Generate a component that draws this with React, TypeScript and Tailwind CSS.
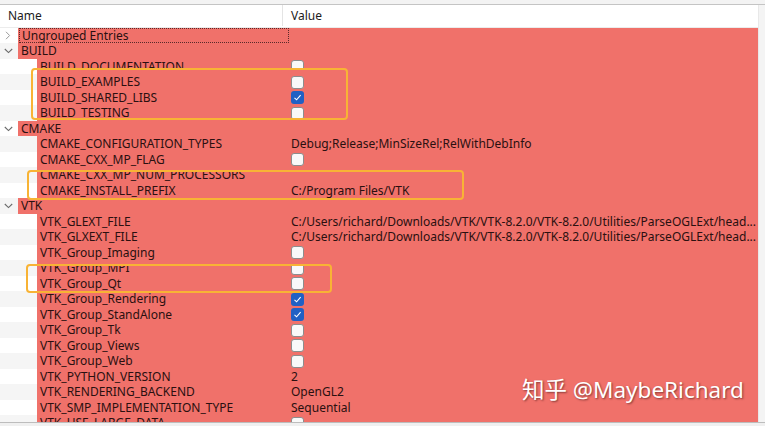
import React from "react";

type Val = { cb?: boolean; text?: string } | null;
type Row =
  | { kind: "group"; label: string; open: boolean; focus?: boolean }
  | { kind: "item"; label: string; value: Val; clip?: "top" | "bottom"; cut?: number };

const rows: Row[] = [
  { kind: "group", label: "Ungrouped Entries", open: false, focus: true },
  { kind: "group", label: "BUILD", open: true },
  { kind: "item", label: "BUILD_DOCUMENTATION", value: { cb: false }, clip: "bottom", cut: 10.5 },
  { kind: "item", label: "BUILD_EXAMPLES", value: { cb: false } },
  { kind: "item", label: "BUILD_SHARED_LIBS", value: { cb: true } },
  { kind: "item", label: "BUILD_TESTING", value: { cb: false } },
  { kind: "group", label: "CMAKE", open: true },
  { kind: "item", label: "CMAKE_CONFIGURATION_TYPES", value: { text: "Debug;Release;MinSizeRel;RelWithDebInfo" } },
  { kind: "item", label: "CMAKE_CXX_MP_FLAG", value: { cb: false } },
  { kind: "item", label: "CMAKE_CXX_MP_NUM_PROCESSORS", value: null, clip: "top", cut: 4 },
  { kind: "item", label: "CMAKE_INSTALL_PREFIX", value: { text: "C:/Program Files/VTK" } },
  { kind: "group", label: "VTK", open: true },
  { kind: "item", label: "VTK_GLEXT_FILE", value: { text: "C:/Users/richard/Downloads/VTK/VTK-8.2.0/VTK-8.2.0/Utilities/ParseOGLExt/head..." } },
  { kind: "item", label: "VTK_GLXEXT_FILE", value: { text: "C:/Users/richard/Downloads/VTK/VTK-8.2.0/VTK-8.2.0/Utilities/ParseOGLExt/head..." } },
  { kind: "item", label: "VTK_Group_Imaging", value: { cb: false } },
  { kind: "item", label: "VTK_Group_MPI", value: { cb: false }, clip: "top", cut: 4.5 },
  { kind: "item", label: "VTK_Group_Qt", value: { cb: false } },
  { kind: "item", label: "VTK_Group_Rendering", value: { cb: true } },
  { kind: "item", label: "VTK_Group_StandAlone", value: { cb: true } },
  { kind: "item", label: "VTK_Group_Tk", value: { cb: false } },
  { kind: "item", label: "VTK_Group_Views", value: { cb: false } },
  { kind: "item", label: "VTK_Group_Web", value: { cb: false } },
  { kind: "item", label: "VTK_PYTHON_VERSION", value: { text: "2" } },
  { kind: "item", label: "VTK_RENDERING_BACKEND", value: { text: "OpenGL2" } },
  { kind: "item", label: "VTK_SMP_IMPLEMENTATION_TYPE", value: { text: "Sequential" } },
  { kind: "item", label: "VTK_USE_LARGE_DATA", value: { cb: false } },
];

function Checkbox({ checked }: { checked: boolean }) {
  return checked ? (
    <span className="mt-[1.5px] flex h-[13px] w-[13px] items-center justify-center rounded-[3px] bg-[#2160c4]">
      <svg width="9" height="9" viewBox="0 0 9 9">
        <path d="M1.5 4.8 L3.6 6.8 L7.6 2.2" fill="none" stroke="#fff" strokeWidth="1.1" />
      </svg>
    </span>
  ) : (
    <span className="mt-[1.5px] block h-[13px] w-[13px] rounded-[3px] border border-[#8d8d8d] bg-[#f9f9f9]" />
  );
}

function Chevron({ open }: { open: boolean }) {
  return open ? (
    <svg width="9" height="6" viewBox="0 0 9 6" className="mt-[1px]">
      <path d="M0.8 1 L4.5 4.6 L8.2 1" fill="none" stroke="#6a6a6a" strokeWidth="1.1" />
    </svg>
  ) : (
    <svg width="6" height="9" viewBox="0 0 6 9">
      <path d="M1 0.8 L4.6 4.5 L1 8.2" fill="none" stroke="#9a9a9a" strokeWidth="1" />
    </svg>
  );
}

function RowContent({ row }: { row: Extract<Row, { kind: "item" }> }) {
  const inner = (
    <div className="flex h-[15.5px] leading-[15.5px]">
      <div className="w-[250px] shrink-0 pl-[3px] whitespace-nowrap">{row.label}</div>
      <div className="flex-1 pl-[4px] whitespace-nowrap overflow-hidden">
        {row.value && row.value.cb !== undefined ? <Checkbox checked={row.value.cb} /> : row.value?.text}
      </div>
    </div>
  );
  if (row.clip === "bottom") {
    return <div className="h-[10.5px] overflow-hidden">{inner}</div>;
  }
  if (row.clip === "top") {
    const cut = row.cut ?? 4;
    return (
      <div className="overflow-hidden" style={{ marginTop: cut, height: 15.5 - cut }}>
        <div style={{ marginTop: -cut }}>{inner}</div>
      </div>
    );
  }
  return inner;
}

export default function App() {
  return (
    <div
      className="relative h-[426px] w-[765px] overflow-hidden bg-[#f0f0f0] text-[12px] text-[#2a1010]"
      style={{ fontFamily: '"Noto Sans", "Noto Sans CJK SC", sans-serif' }}
    >
      <div className="h-[3.5px] bg-[#f3f3f3]" />
      <div className="flex h-[418.5px] border-t border-[#c4c4c4]">
        <div className="flex w-[758px] flex-col overflow-hidden bg-white">
          {/* header */}
          <div className="flex h-[23px] shrink-0 items-center border-b border-[#ececec] bg-white text-[#1c1c1c]">
            <div className="relative w-[283px] pl-[8px]">
              Name
              <span className="absolute right-0 top-[-4px] h-[23px] w-px bg-[#e4e4e4]" />
            </div>
            <div className="pl-[8px]">Value</div>
          </div>
          {/* rows */}
          <div className="flex-1 overflow-hidden">
            {rows.map((row, i) => (
              <div key={i} className={`flex h-[15.5px] ${i % 2 === 1 ? "bg-[#f5f5f5]" : "bg-white"}`}>
                {row.kind === "group" ? (
                  <>
                    <div className="flex w-[18px] shrink-0 items-center justify-center pr-[2px]">
                      <Chevron open={row.open} />
                    </div>
                    <div className="flex flex-1 bg-[#f0716a] leading-[15.5px]">
                      <div
                        className={`w-[270px] shrink-0 pl-[3px] whitespace-nowrap ${
                          row.focus ? "ml-[1px] w-[269px] pl-[2px] outline-1 outline-dotted outline-[#5a2a2a] -outline-offset-1" : ""
                        }`}
                      >
                        {row.label}
                      </div>
                      <div className="flex-1" />
                    </div>
                  </>
                ) : (
                  <>
                    <div className="w-[37px] shrink-0" />
                    <div className="flex-1 bg-[#f0716a]">
                      <RowContent row={row} />
                    </div>
                  </>
                )}
              </div>
            ))}
          </div>
        </div>
        <div className="flex-1 border-l border-[#e8e8e8] bg-[#f4f4f4]" />
      </div>
      <div className="h-[4px] border-t border-[#bdbdbd] bg-[#f0f0f0]" />

      {/* annotation boxes */}
      <div className="absolute left-[31px] top-[68px] h-[52px] w-[317px] rounded-[4px] border-2 border-[#f8b335]" />
      <div className="absolute left-[27px] top-[170px] h-[30px] w-[437px] rounded-[4px] border-2 border-[#f8b335]" />
      <div className="absolute left-[26px] top-[264px] h-[29px] w-[306px] rounded-[4px] border-2 border-[#f8b335]" />

      {/* watermark */}
      <div
        className="absolute left-[522px] top-[373px] text-[22.5px] text-white [text-shadow:1px_1px_2px_rgba(60,20,20,0.6)]"
        style={{ fontFamily: '"Noto Sans", "Noto Sans CJK SC", sans-serif' }}
      >
        知乎 @MaybeRichard
      </div>
    </div>
  );
}
